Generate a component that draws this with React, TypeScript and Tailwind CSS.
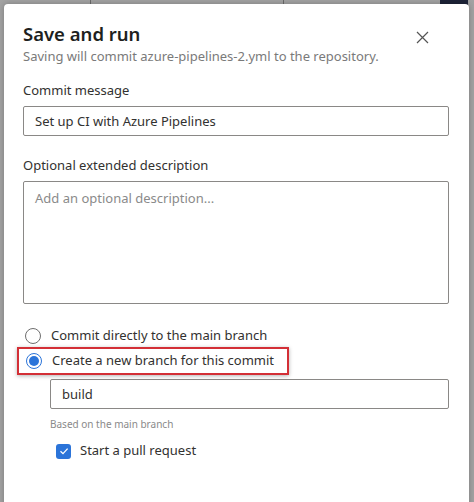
import React, { useState } from 'react';

const font = { fontFamily: '"Noto Sans", "Open Sans", Arial, sans-serif' };

const App = () => {
    const [mode, setMode] = useState<'direct' | 'branch'>('branch');
    const [pullRequest, setPullRequest] = useState(true);

    return (
        <div className="relative h-[502px] w-[474px] overflow-hidden bg-[#a3a3a3] pl-[4px] pr-[5px] pt-[4px]" style={font}>
            {/* page behind the overlay */}
            <div className="absolute left-[90px] top-0 h-[4px] w-px bg-[#6b6b6b]" />
            <div className="absolute left-[283px] top-0 h-[4px] w-px bg-[#6b6b6b]" />
            <div className="absolute right-[6px] top-0 h-[5px] w-[28px] bg-[#1d2338]" />

            <div className="relative h-[560px] rounded-t-[4px] bg-white pl-[19px] pr-[20px] pt-[17px] shadow-[0_0_6px_rgba(0,0,0,0.25)]">
                <div className="flex items-start justify-between">
                    <div>
                        <h1 className="text-[18.5px] font-semibold leading-[26px] text-[#201f1e]">Save and run</h1>
                        <p className="text-[13px] leading-[18px] text-[#7a7a7a]">
                            Saving will commit azure-pipelines-2.yml to the repository.
                        </p>
                    </div>
                    <button className="mr-[20px] mt-[10px] text-[#555]">
                        <svg width="13" height="13" viewBox="0 0 13 13" fill="none" stroke="currentColor" strokeWidth="1.2">
                            <path d="M1 1L12 12M12 1L1 12" />
                        </svg>
                    </button>
                </div>

                <label className="mt-[15px] block text-[13px] leading-[20px] text-[#323130]">Commit message</label>
                <input
                    type="text"
                    defaultValue="Set up CI with Azure Pipelines"
                    className="mt-[6px] block h-[30px] w-full rounded-[2px] border border-[#8a8886] px-[11px] text-[13px] text-[#323130] outline-none"
                />

                <label className="mt-[19px] block text-[13px] leading-[20px] text-[#323130]">Optional extended description</label>
                <textarea
                    placeholder="Add an optional description..."
                    className="mt-[6px] block h-[123px] w-full resize-none rounded-[2px] border border-[#8a8886] px-[11px] py-[6px] text-[13px] leading-[20px] text-[#323130] outline-none placeholder:text-[#8a8a8a]"
                />

                <div className="mt-[23px] flex flex-col gap-[2px] text-[13px] text-[#323130]">
                    <button className="flex h-[18px] items-center gap-[10px] whitespace-nowrap pl-[2px]" onClick={() => setMode('direct')}>
                        <span className="flex h-[16px] w-[16px] items-center justify-center rounded-full border border-[#6e6e6e] bg-white">
                            {mode === 'direct' && <span className="h-[8px] w-[8px] rounded-full bg-[#2b74d9]" />}
                        </span>
                        Commit directly to the main branch
                    </button>
                    <div className="-ml-[6px] w-[272px] border-2 border-[#d32f36] px-[7px] py-[3px] shadow-[0_1px_4px_rgba(0,0,0,0.3)]">
                        <button className="flex h-[18px] items-center gap-[10px] whitespace-nowrap" onClick={() => setMode('branch')}>
                            <span className="flex h-[16px] w-[16px] items-center justify-center rounded-full border border-[#2b74d9] bg-white">
                                {mode === 'branch' && <span className="h-[10px] w-[10px] rounded-full bg-[#2b74d9]" />}
                            </span>
                            Create a new branch for this commit
                        </button>
                    </div>
                </div>

                <div className="ml-[27px] mt-[4px]">
                    <input
                        type="text"
                        defaultValue="build"
                        className="block h-[30px] w-full rounded-[2px] border border-[#8a8886] px-[11px] text-[13px] text-[#323130] outline-none"
                    />
                    <p className="mt-[8px] text-[10px] leading-[14px] text-[#8a8a8a]">Based on the main branch</p>
                    <button
                        className="mt-[12px] flex h-[16px] items-center gap-[9px] pl-[6px] text-[13px] text-[#323130]"
                        onClick={() => setPullRequest(!pullRequest)}
                    >
                        <span className={`flex h-[15px] w-[15px] items-center justify-center rounded-[3px] ${pullRequest ? 'bg-[#2b74d9]' : 'border border-[#6e6e6e] bg-white'}`}>
                            {pullRequest && (
                                <svg width="10" height="10" viewBox="0 0 10 10" fill="none" stroke="white" strokeWidth="1.3">
                                    <path d="M1.5 5.2L4 7.6L8.6 2.6" />
                                </svg>
                            )}
                        </span>
                        Start a pull request
                    </button>
                </div>
            </div>
        </div>
    );
};

export default App;
